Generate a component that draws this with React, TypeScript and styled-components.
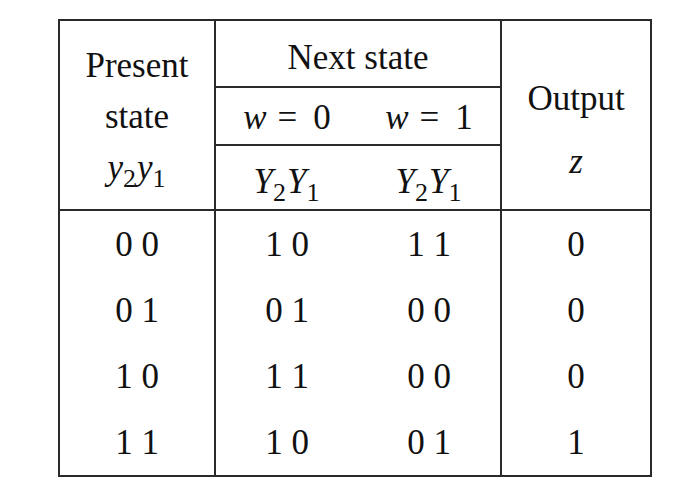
import styled, { createGlobalStyle } from 'styled-components'

const GlobalStyle = createGlobalStyle`
	html, body {
		margin: 0;
		padding: 0;
		background: #ffffff;
	}
	body {
		font-family: "Liberation Serif", "Times New Roman", serif;
		color: #111111;
	}
`

const line = '2px solid #2a2a2a'

const Page = styled.div`
	width: 700px;
	height: 492px;
	padding: 19px 0 0 58px;
	box-sizing: border-box;
`

const Table = styled.div`
	display: grid;
	box-sizing: border-box;
	width: 594px;
	border: ${line};
	grid-template-columns: 156px 142px 142px 150px;
	grid-template-rows: 67px 58px 65px repeat(4, 66px);
	font-size: 35px;
`

const Cell = styled.div<{ $right?: boolean; $left?: boolean; $bottom?: boolean }>`
	box-sizing: border-box;
	text-align: center;
	white-space: pre;
	border-right: ${(p) => (p.$right ? line : 'none')};
	border-left: ${(p) => (p.$left ? line : 'none')};
	border-bottom: ${(p) => (p.$bottom ? line : 'none')};
`

const PresentHead = styled(Cell)`
	grid-column: 1;
	grid-row: 1 / 4;
	padding-top: 19px;
	line-height: 51px;
`

const NextHead = styled(Cell)`
	grid-column: 2 / 4;
	grid-row: 1;
	padding-top: 17px;
	line-height: 40px;
`

const InputHead = styled(Cell)<{ $col: number }>`
	grid-column: ${(p) => p.$col};
	grid-row: 2;
	padding-top: 10px;
	line-height: 40px;
`

const StateHead = styled(Cell)<{ $col: number }>`
	grid-column: ${(p) => p.$col};
	grid-row: 3;
	padding-top: 16px;
	line-height: 40px;
`

const OutputHead = styled(Cell)`
	grid-column: 4;
	grid-row: 1 / 4;
	padding-top: 46px;
	line-height: 63px;
`

const BodyCell = styled(Cell)`
	line-height: 66px;
	padding-top: 1px;
`

const Line = styled.div``

const Var = styled.i`
	font-style: italic;
`

const Sub = styled.sub`
	font-size: 26px;
	font-style: normal;
	line-height: 0;
	vertical-align: -8px;
	margin-right: 1px;
`

const Eq = styled.span`
	margin: 0 16px 0 11px;
`

const rows = [
	['0 0', '1 0', '1 1', '0'],
	['0 1', '0 1', '0 0', '0'],
	['1 0', '1 1', '0 0', '0'],
	['1 1', '1 0', '0 1', '1'],
]

function StateVars({ name }: { name: string }) {
	return (
		<>
			<Var>{name}</Var><Sub>2</Sub><Var>{name}</Var><Sub>1</Sub>
		</>
	)
}

export default function App() {
	return (
		<Page>
			<GlobalStyle />
			<Table>
				<PresentHead $right $bottom>
					<Line>Present</Line>
					<Line>state</Line>
					<Line><StateVars name="y" /></Line>
				</PresentHead>
				<NextHead $bottom>Next state</NextHead>
				<InputHead $col={2} $bottom>
					<Var>w</Var><Eq>=</Eq>0
				</InputHead>
				<InputHead $col={3} $bottom>
					<Var>w</Var><Eq>=</Eq>1
				</InputHead>
				<StateHead $col={2} $bottom><StateVars name="Y" /></StateHead>
				<StateHead $col={3} $bottom><StateVars name="Y" /></StateHead>
				<OutputHead $left $bottom>
					<Line>Output</Line>
					<Line><Var>z</Var></Line>
				</OutputHead>
				{rows.map((r, i) =>
					r.map((v, j) => (
						<BodyCell key={`${i}-${j}`} $right={j === 0} $left={j === 3}>
							{v}
						</BodyCell>
					))
				)}
			</Table>
		</Page>
	)
}
